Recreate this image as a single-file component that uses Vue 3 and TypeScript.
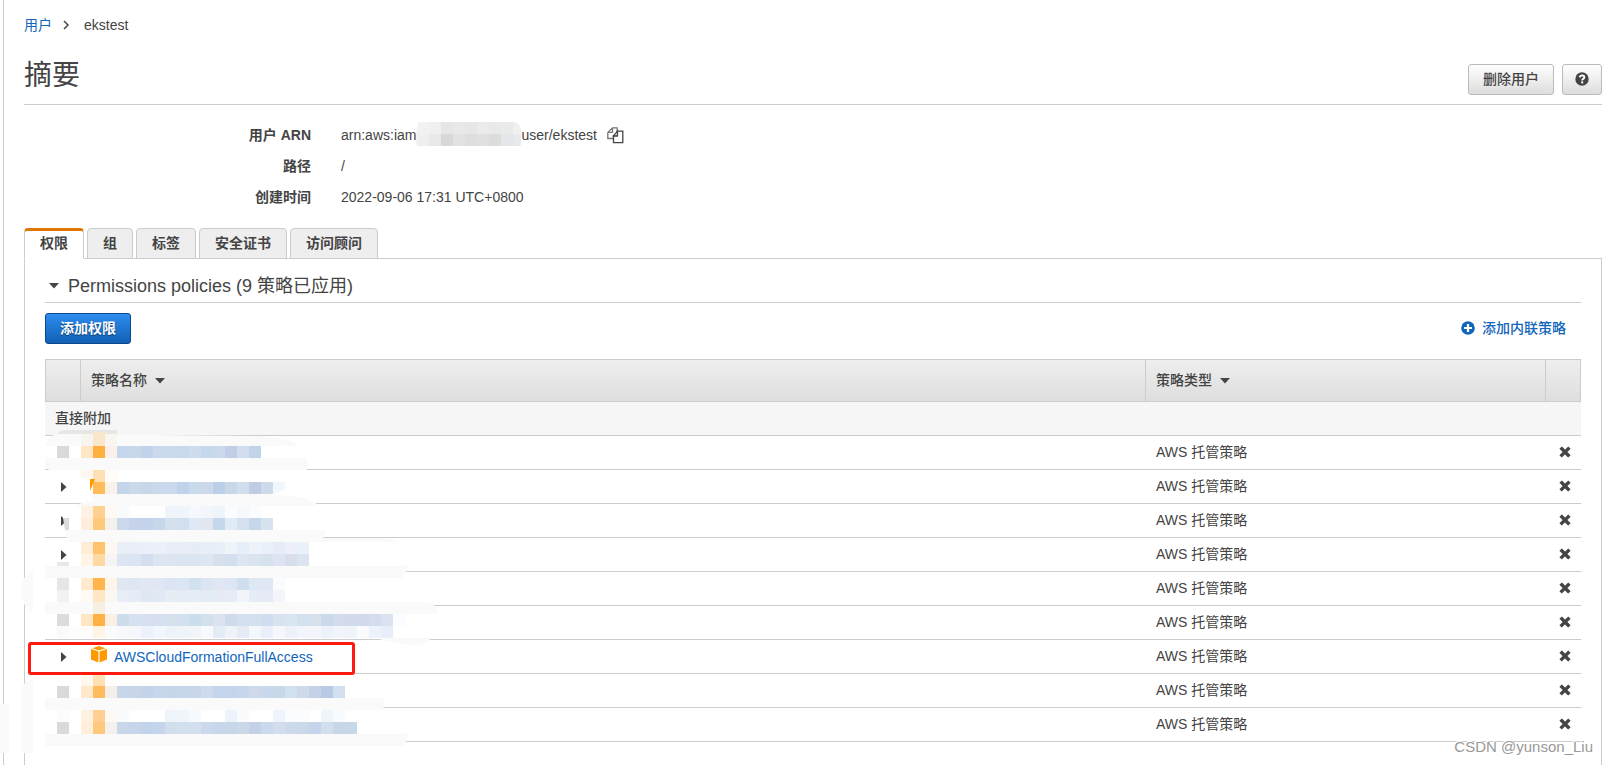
<script setup lang="ts">
interface Policy {
  name?: string
  expander: boolean
  type: string
}

interface Strip {
  y: number
  x: number
  colors: string
}

const tabs = ['权限', '组', '标签', '安全证书', '访问顾问']

const expanders = [false, true, true, true, false, false, true, false, false]
const policies: Policy[] = expanders.map((expander, i) => ({
  name: i === 6 ? 'AWSCloudFormationFullAccess' : undefined,
  expander,
  type: 'AWS 托管策略',
}))

const CELL = 12

// Each strip is a run of square mosaic cells, left to right.
const strips: Strip[] = [
  { y: 434, x: 81, colors: 'f8f5f0 fae7cb f9f6f2' },
  { y: 446, x: 57, colors: 'dadada ffffff ffe6c4 ffb040 fbf0ea c6d6ec c8d7e9 c1d3ea cad9ee cbd9ed c9d8ec cdddee c6d9ec ccd8ec c2cde6 d2deee c2d4ea' },
  { y: 470, x: 81, colors: 'fff7f0 ffe0b3 fffbf7' },
  { y: 482, x: 93, colors: 'ffbc58 f8f2ea c4d5ea ccd9ea c8d7e8 cad9ee cbd9ec bfd4ec c9daec ced8ea bccfe8 c9d7e9 d0deee c0cbe4 cddaec f2f7fc' },
  { y: 506, x: 81, colors: 'fff2e2 ffd190 fff9f3 f8fafd ffffff ffffff ffffff eef4fa f0f5fb f5f8fe f2f6fb eff4fa fafcff f5f9fc fafcfe' },
  { y: 518, x: 81, colors: 'ffeedb ffc97c f5f2ee ccd9ec c7d3ea c2d3eb c8d6ec d5e0ee d2dfef dfe9f5 e1e6f1 c5d7ec e0ebf6 d7e0ef c4d7ed d8e3ef' },
  { y: 542, x: 81, colors: 'ffedd8 ffc36d fff8f2 e9eef7 e9eef8 ebeff9 ebf0f9 e8edf6 e9edf6 e6edf5 e8edf6 e8eff8 eff4f8 e6eef9 eef2fb eaf0f9 e6ebf7 edf0fa eaf1fb' },
  { y: 554, x: 81, colors: 'fff4e6 ffd9a4 f7f5f4 dde5f2 dbe4f2 d3dfee dce5f1 dde5f0 dae5f1 dbe5f2 dde7f2 d7e1ee d3dfee dde7f2 d9e3f2 d6e2ec dfe4f4 d9deeb dbe5f1' },
  { y: 578, x: 57, colors: 'e6e6e6 ffffff ffead0 ffb54c fff4e8 dfe7f3 dfe6f3 e2e8f3 dfe6f4 dae4f3 dce6f3 d1e1f0 dbe5f3 e0e6f2 dee6f3 cfdfef dee8f4 e0e6f3 fafbfd' },
  { y: 590, x: 57, colors: 'f2f2f2 ffffff fffaf3 ffe7c5 fbf8f4 e8eef7 e5ecf6 dfe7f4 e1e9f4 e6edf5 e5ecf5 e7edf6 e3ebf5 e5eaf3 e6ebf5 f1f5fa e5ecf7 e6eaf4 f2f5fa' },
  { y: 602, x: 93, colors: 'f7efe2' },
  { y: 614, x: 57, colors: 'dcdcdc ffffff ffe6c5 ffb143 fbf0e4 cdddec d7e1ef d6e0ee d5dff0 d5e1ed d3e0ef cbdeeb d5e0ed dce2f0 cfdaeb d4e0ee d3e0ee cfddee d9e2f1 d8e6f2 d3e0ee d6e1eb cbd9ec d3dcec d1dbeb d1daec d3dded dbe2f0 fbfcff' },
  { y: 626, x: 57, colors: 'fafafa fdfdfd fefdfb fff4e5 fafbfd f8f9fd f5f7fb ebf2fc f3f6fc eef3fa eff4f9 f1f5fa f8f9fd e3ebf7 eff3f9 e5ecf5 f3f6fb eaf0fa f5f7fb ecf1fb f2f5fc f2f6fa edf2fa f1f4f8 eff4fa fbfbfe edf1fc e8eef9' },
  { y: 674, x: 81, colors: 'fff8ef ffdfb4 fffdfa' },
  { y: 686, x: 57, colors: 'dadada ffffff ffe9cc ffbc5d f5efeb c8d6ea c8d5e9 c3d3ea c8d6ec c6d5ea c7d6ea c7d6eb cedaee c4d4ea c4d4ea c6d6ec cedaea cad8ed c9d7ea d2e1f0 ced9ea c4d1e8 b9cae6 d2dff1' },
  { y: 710, x: 57, colors: 'fcfcfc ffffff fff1e0 ffd091 fff9f4 f9fbfc ffffff ffffff ffffff eef4f9 f0f5fa f7fafd ffffff ffffff edf3fb f9fbfd ffffff ffffff eff3fc fafcfd fafcfd ffffff eff5f9 f9fcfe' },
  { y: 722, x: 57, colors: 'dadada ffffff ffeedb ffc97d f5f1ee c9d7e9 c8d4e9 c1d2eb c7d5ec d3deed d2dfee d5e0ef ccd9ed c8d6e9 c7d7ea ccd8e8 c2d1e8 ccd9ec d4ddee cddaea cbd8e9 c5d6ec d2dfec c9d6e8 c8d7ea' },
]

const cells = strips.flatMap((s) =>
  s.colors.split(' ').map((c, i) => ({ x: s.x + i * CELL, y: s.y, fill: '#' + c })),
)

const bands = [
  'M45 446Q46 437 56 434L260 436Q288 437 299 446Z',
  'M45 458H306Q308 464 307 470H49Q45 467 45 458Z',
  'M92 494H271L304 498Q314 501 319 506H73L82 503Q90 501 92 494Z',
  'M65 530H326L322 542H69Q66 538 65 530Z',
  'M322 538H386L398 542H322Z',
  'M45 566H408Q406 574 402 578H45Z',
  'M45 602H430Q436 605 438 614H45Z',
  'M379 638H432Q424 645 416 645Q400 645 379 639Z',
  'M45 698H385L383 710H45Z',
  'M45 734H408Q407 742 404 746H45Z',
  'M33 570V612Q21 606 21 593V589Q22 576 33 570Z',
  'M33 678V753H21V690Q24 681 33 678Z',
  'M0 704H9V753H0Z',
]

const arnCells = [
  'f0f0f0 e6e6e6 e9e9ea e7e7e8 ebebec e9e9e9 e9eaea f0f0f0 f2f3f4'.split(' '),
  'efefef e9e9e9 d8d8d9 e2e2e3 dededf e0e0e1 dcdcdd e5e6e9 e8e9ea'.split(' '),
]
</script>

<template>
  <main class="page">
    <nav class="breadcrumb" aria-label="breadcrumb">
      <a href="#">用户</a>
      <svg class="chevron" width="6" height="10" viewBox="0 0 6 10"><path d="M1 1L5 5L1 9" fill="none" stroke="#444" stroke-width="1.5" /></svg>
      <span>ekstest</span>
    </nav>

    <header class="title-bar">
      <h1>摘要</h1>
      <div class="actions">
        <button type="button" class="btn">删除用户</button>
        <button type="button" class="btn help" aria-label="帮助">
          <svg width="14" height="14" viewBox="0 0 14 14">
            <circle cx="7" cy="7" r="6.7" fill="#444" />
            <path d="M4.8 5.3Q5.1 3.4 7.1 3.4Q9.3 3.5 9.3 5.2Q9.3 6.2 8.2 6.9Q7.2 7.5 7.2 8.4" fill="none" stroke="#fff" stroke-width="1.9" />
            <rect x="6.2" y="9.4" width="2" height="2" fill="#fff" />
          </svg>
        </button>
      </div>
    </header>

    <dl class="details">
      <dt>用户 ARN</dt>
      <dd class="arn">
        <span>arn:aws:iam</span>
        <svg class="arn-mosaic" width="105" height="24" viewBox="1 0 105 24">
          <clipPath id="arn-clip"><path d="M4 0H100Q107 4 107 12Q107 20 105 24H2Q-1 12 4 0Z" /></clipPath>
          <g clip-path="url(#arn-clip)" shape-rendering="crispEdges">
            <rect width="107" height="24" fill="#f2f2f2" />
            <template v-for="(line, r) in arnCells" :key="r">
              <rect v-for="(c, i) in line" :key="i" :x="14 + (i - (r ? 1 : 0)) * 12" :y="r * 12" width="12" height="12" :fill="'#' + c" />
            </template>
          </g>
        </svg>
        <span>user/ekstest</span>
        <button type="button" class="copy" aria-label="复制 ARN">
          <svg width="17" height="17" viewBox="0 0 17 17" fill="#fff" stroke-width="1.3">
            <path d="M5.5 .8H10.2V11.5H.8V5.4Z M5.5 .8V5.4H.8" stroke="#777" />
            <path d="M10.4 4.2H15.8V15.6H6.5V8.8H10.4Z" stroke="#444" />
            <path d="M10.4 4.2V8.8H6.5Z" stroke="#444" />
          </svg>
        </button>
      </dd>
      <dt>路径</dt>
      <dd>/</dd>
      <dt>创建时间</dt>
      <dd>2022-09-06 17:31 UTC+0800</dd>
    </dl>

    <div class="tabs" role="tablist">
      <button v-for="(tab, i) in tabs" :key="tab" type="button" role="tab" class="tab" :class="{ active: i === 0 }" :aria-selected="i === 0">{{ tab }}</button>
    </div>

    <section class="panel">
      <h2>
        <svg width="10" height="6" viewBox="0 0 10 6"><path d="M0 0H10L5 5.5Z" fill="#444" /></svg>
        Permissions policies (9 策略已应用)
      </h2>
      <div class="toolbar">
        <button type="button" class="btn primary">添加权限</button>
        <a href="#" class="inline-policy">
          <svg width="14" height="14" viewBox="0 0 14 14"><circle cx="7" cy="7" r="6.8" fill="#1166bb" /><path d="M7 3V11M3 7H11" stroke="#fff" stroke-width="2.2" /></svg>
          添加内联策略
        </a>
      </div>

      <table>
        <colgroup>
          <col class="c-toggle" />
          <col />
          <col class="c-type" />
          <col class="c-remove" />
        </colgroup>
        <thead>
          <tr>
            <th></th>
            <th>策略名称<svg class="sort" width="10" height="6" viewBox="0 0 10 6"><path d="M0 0H10L5 5.5Z" fill="#444" /></svg></th>
            <th>策略类型<svg class="sort" width="10" height="6" viewBox="0 0 10 6"><path d="M0 0H10L5 5.5Z" fill="#444" /></svg></th>
            <th></th>
          </tr>
        </thead>
        <tbody>
          <tr class="group"><td colspan="4">直接附加</td></tr>
          <tr v-for="(p, i) in policies" :key="i">
            <td class="toggle">
              <button v-if="p.expander" type="button" class="icon-btn" aria-label="展开">
                <svg width="6" height="10" viewBox="0 0 6 10"><path d="M0 0L5.5 5L0 10Z" fill="#444" /></svg>
              </button>
            </td>
            <td class="name">
              <a v-if="p.name" href="#" class="policy">
                <svg class="cube" width="16" height="17" viewBox="0 0 16 17" fill="#ff9900">
                  <path d="M8 0L14.8 2.2L8 4.6L1.2 2.2Z" />
                  <path d="M0 3.1L7.4 5.5V16.5L0 13.6Z" />
                  <path d="M16 3.1L8.6 5.5V16.5L16 13.6Z" />
                </svg>
                {{ p.name }}
              </a>
            </td>
            <td>{{ p.type }}</td>
            <td class="remove">
              <button type="button" class="icon-btn" aria-label="移除">
                <svg width="12" height="12" viewBox="0 0 12 12"><path d="M2.8 2.8L9.2 9.2M9.2 2.8L2.8 9.2" stroke="#444" stroke-width="3.4" stroke-linecap="square" /></svg>
              </button>
            </td>
          </tr>
        </tbody>
      </table>
    </section>

    <svg class="overlay" width="480" height="765" viewBox="0 0 480 765" aria-hidden="true">
      <path d="M57 434Q60 430 68 430H117V434Z" fill="#e6e6e4" />
      <rect x="93" y="432" width="12" height="2" fill="#fae7cb" />
      <path v-for="d in bands" :key="d" :d="d" fill="#fafafa" />
      <g shape-rendering="crispEdges">
        <rect v-for="c in cells" :key="c.x + '-' + c.y" :x="c.x" :y="c.y" width="12" height="12" :fill="c.fill" />
        <rect x="57" y="562" width="12" height="4" fill="#e8e8e8" />
      </g>
      <path d="M63 518H69V530H65Z" fill="#dcdcdc" />
      <path d="M81 478H91L92 502H81Z" fill="#fff" />
      <path d="M90 479H95L90 491Z" fill="#ff9900" />
      <path d="M285 490L271 495H285Z" fill="#fff" />
    </svg>
    <div class="highlight" aria-hidden="true"></div>
    <div class="watermark">CSDN @yunson_Liu</div>
  </main>
</template>

<style>
body {
  margin: 0;
}
</style>

<style scoped>
.page {
  position: relative;
  box-sizing: border-box;
  display: flex;
  flex-direction: column;
  min-height: 100vh;
  padding: 0 5px 0 24px;
  background: linear-gradient(#ccc, #ccc) 3px 0 / 1px 100% no-repeat #fff;
  color: #444;
  font: 14px/20px "Liberation Sans", "Noto Sans CJK SC", sans-serif;
}

a {
  color: #1166bb;
  text-decoration: none;
}

button {
  font: inherit;
  color: inherit;
  cursor: pointer;
}

svg {
  display: block;
  flex: none;
}

.breadcrumb {
  display: flex;
  align-items: center;
  height: 20px;
  padding-top: 15px;
}

.chevron {
  margin: 0 15px 0 11px;
}

.title-bar {
  display: flex;
  justify-content: space-between;
  align-items: flex-end;
  height: 69px;
  border-bottom: 1px solid #ccc;
}

h1 {
  margin: 0 0 8px;
  font-size: 28px;
  line-height: 40px;
  font-weight: 400;
}

.actions {
  display: flex;
  gap: 8px;
  margin-bottom: 9px;
}

.btn {
  box-sizing: border-box;
  height: 31px;
  padding: 0 14px 2px;
  border: 1px solid #bbb;
  border-radius: 3px;
  background: linear-gradient(#fff, #ddd);
  font-weight: 500;
  line-height: 20px;
}

.help {
  padding: 0 12px 2px;
}

.details {
  display: grid;
  grid-template-columns: 287px 1fr;
  column-gap: 30px;
  row-gap: 11px;
  margin: 20px 0 21px;
}

dt {
  text-align: right;
  font-weight: 700;
}

dd {
  margin: 0;
}

.arn {
  display: flex;
  align-items: center;
  height: 20px;
}

.copy {
  margin-left: 10px;
  padding: 0;
  border: 0;
  background: none;
}

.arn-mosaic {
  margin-bottom: 2px;
}

.tabs {
  display: flex;
  gap: 3px;
  position: relative;
  z-index: 1;
  margin-bottom: -1px;
}

.tab {
  box-sizing: border-box;
  height: 31px;
  padding: 0 15px 2px;
  border: 1px solid #ccc;
  border-radius: 4px 4px 0 0;
  background: #eee;
  font-weight: 700;
}

.tab.active {
  border-top: 3px solid #e07700;
  border-bottom-color: #fff;
  background: #fff;
  padding-bottom: 4px;
}

.panel {
  flex: 1;
  padding: 10px 20px 0;
  border: 1px solid #ccc;
  border-bottom: 0;
}

h2 {
  display: flex;
  align-items: center;
  gap: 9px;
  margin: 0;
  padding: 1px 0 0 4px;
  height: 32px;
  border-bottom: 1px solid #ccc;
  font-size: 18px;
  line-height: 32px;
  font-weight: 400;
}

.toolbar {
  display: flex;
  justify-content: space-between;
  align-items: center;
  padding: 10px 15px 15px 0;
}

.primary {
  border-color: #0a4a8c;
  background: linear-gradient(#2e8df0, #1160b4);
  color: #fff;
  font-weight: 700;
  text-shadow: 0 1px 1px #063a70;
}

.inline-policy {
  display: flex;
  align-items: center;
  gap: 7px;
  padding-bottom: 2px;
  font-weight: 500;
}

table {
  width: 100%;
  table-layout: fixed;
  border-collapse: separate;
  border-spacing: 0;
}

.c-toggle {
  width: 36px;
}

.c-type {
  width: 400px;
}

.c-remove {
  width: 35px;
}

th {
  height: 39px;
  padding: 0 10px 2px;
  border: 1px solid #ccc;
  border-left: 0;
  background: linear-gradient(#eee, #dedede);
  text-align: left;
  font-weight: 500;
}

th:first-child {
  border-left: 1px solid #ccc;
}

.sort {
  display: inline-block;
  margin-left: 8px;
  vertical-align: 1px;
}

td {
  height: 31px;
  padding: 0 10px 2px;
  border-bottom: 1px solid #ccc;
}

.name {
  height: 33px;
  padding-bottom: 0;
}

.group td {
  background: #f6f6f6;
  font-weight: 500;
}

.toggle {
  height: 33px;
  padding: 0 0 0 16px;
}

.remove {
  padding: 0 0 2px 13px;
}

.icon-btn {
  display: block;
  padding: 0;
  border: 0;
  background: none;
}

.policy {
  display: flex;
  align-items: center;
  gap: 7px;
}

.cube {
  margin-bottom: 4px;
}

.overlay {
  position: absolute;
  top: 0;
  left: 0;
  pointer-events: none;
}

.highlight {
  position: absolute;
  top: 642px;
  left: 28px;
  box-sizing: border-box;
  width: 327px;
  height: 33px;
  border: 3px solid #ff1a0f;
  border-radius: 3px;
  pointer-events: none;
}

.watermark {
  position: absolute;
  right: 14px;
  bottom: 8px;
  color: #999;
  font-size: 15px;
  text-shadow: -1px -1px 0 #fff;
}
</style>
